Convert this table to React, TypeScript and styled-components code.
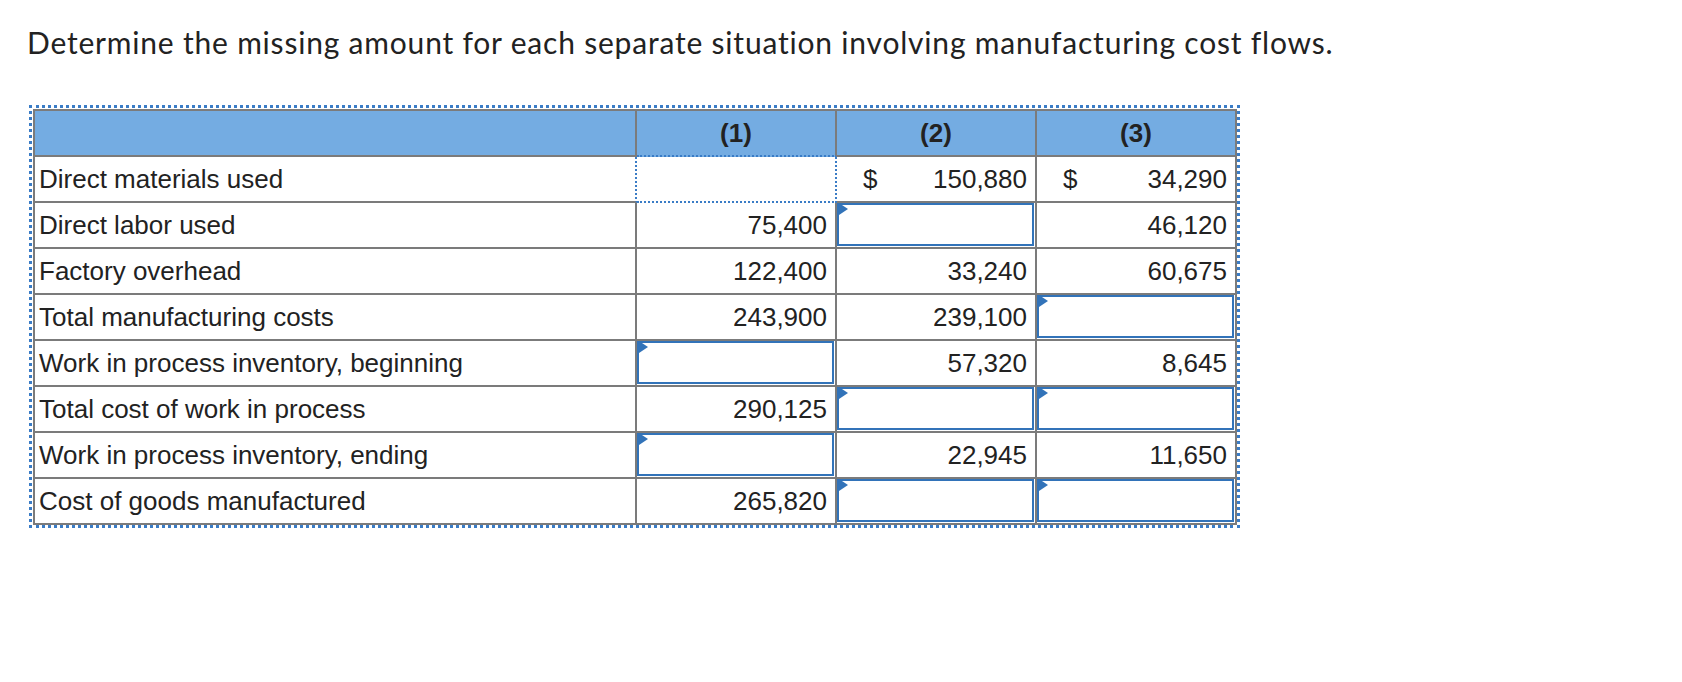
import React from "react";
import styled, { createGlobalStyle } from "styled-components";

const GlobalStyle = createGlobalStyle`
  html, body {
    margin: 0;
    padding: 0;
    background: #ffffff;
  }
`;

const BLUE = "#3a7cc6";
const GRAY = "#7b7b7b";

const Page = styled.div`
  padding: 25px 0 0 27px;
  font-family: "Liberation Sans", Arial, sans-serif;
  color: #222222;
`;

const Title = styled.h1`
  margin: 0 0 45px 0;
  font-family: Lato, "Open Sans", sans-serif;
  font-weight: 400;
  font-size: 30px;
  letter-spacing: 0.8px;
  line-height: 35px;
  color: #222222;
`;

const FocusFrame = styled.div`
  display: inline-block;
  margin-left: 2px;
  border: 3px dotted ${BLUE};
  padding: 1px 0 0 1px;
`;

const Table = styled.table`
  border-collapse: separate;
  border-spacing: 0;
  border-left: 2px solid ${GRAY};
  font-size: 26px;
`;

const HeadCell = styled.th<{ $dotBottom?: boolean; $label?: boolean }>`
  width: ${(p) => (p.$label ? "600px" : "198px")};
  height: 44px;
  padding: 0;
  background: #74ace2;
  border-top: 2px solid ${GRAY};
  border-right: 2px solid ${GRAY};
  border-bottom: 2px ${(p) => (p.$dotBottom ? `dotted ${BLUE}` : `solid ${GRAY}`)};
  font-weight: 700;
  text-align: center;
  color: #222222;
`;

const LabelCell = styled.td<{ $dotRight?: boolean }>`
  height: 44px;
  padding: 0 4px;
  border-bottom: 2px solid ${GRAY};
  border-right: 2px ${(p) => (p.$dotRight ? `dotted ${BLUE}` : `solid ${GRAY}`)};
  text-align: left;
  white-space: nowrap;
`;

const AmountCell = styled.td<{ $focus?: boolean }>`
  height: 44px;
  padding: 0 8px 0 0;
  border-bottom: 2px ${(p) => (p.$focus ? `dotted ${BLUE}` : `solid ${GRAY}`)};
  border-right: 2px ${(p) => (p.$focus ? `dotted ${BLUE}` : `solid ${GRAY}`)};
  text-align: right;
`;

const Dollar = styled.span`
  float: left;
  margin-left: 26px;
`;

const EntryCell = styled.td`
  height: 44px;
  padding: 0;
  border-bottom: 2px solid ${GRAY};
  border-right: 2px solid ${GRAY};
  vertical-align: top;
`;

const EntryBox = styled.div`
  position: relative;
  box-sizing: border-box;
  height: 43px;
  margin: 0 1px 1px 0;
  border: 2px solid #3273b9;
  background: #ffffff;

  &::before {
    content: "";
    position: absolute;
    top: -2px;
    left: 0;
    width: 0;
    height: 0;
    border-top: 6px solid transparent;
    border-bottom: 6px solid transparent;
    border-left: 9px solid #3273b9;
  }
`;

type Value = { amount?: string; dollar?: boolean; entry?: boolean; focus?: boolean };

const rows: { label: string; values: Value[] }[] = [
  {
    label: "Direct materials used",
    values: [{ focus: true }, { amount: "150,880", dollar: true }, { amount: "34,290", dollar: true }],
  },
  { label: "Direct labor used", values: [{ amount: "75,400" }, { entry: true }, { amount: "46,120" }] },
  { label: "Factory overhead", values: [{ amount: "122,400" }, { amount: "33,240" }, { amount: "60,675" }] },
  { label: "Total manufacturing costs", values: [{ amount: "243,900" }, { amount: "239,100" }, { entry: true }] },
  {
    label: "Work in process inventory, beginning",
    values: [{ entry: true }, { amount: "57,320" }, { amount: "8,645" }],
  },
  { label: "Total cost of work in process", values: [{ amount: "290,125" }, { entry: true }, { entry: true }] },
  { label: "Work in process inventory, ending", values: [{ entry: true }, { amount: "22,945" }, { amount: "11,650" }] },
  { label: "Cost of goods manufactured", values: [{ amount: "265,820" }, { entry: true }, { entry: true }] },
];

export default function App() {
  return (
    <Page>
      <GlobalStyle />
      <Title>Determine the missing amount for each separate situation involving manufacturing cost flows.</Title>
      <FocusFrame>
        <Table>
          <thead>
            <tr>
              <HeadCell $label />
              <HeadCell $dotBottom>(1)</HeadCell>
              <HeadCell>(2)</HeadCell>
              <HeadCell>(3)</HeadCell>
            </tr>
          </thead>
          <tbody>
            {rows.map((row, i) => (
              <tr key={row.label}>
                <LabelCell $dotRight={i === 0}>{row.label}</LabelCell>
                {row.values.map((v, j) =>
                  v.entry ? (
                    <EntryCell key={j}>
                      <EntryBox />
                    </EntryCell>
                  ) : (
                    <AmountCell key={j} $focus={v.focus}>
                      {v.dollar && <Dollar>$</Dollar>}
                      {v.amount}
                    </AmountCell>
                  )
                )}
              </tr>
            ))}
          </tbody>
        </Table>
      </FocusFrame>
    </Page>
  );
}
